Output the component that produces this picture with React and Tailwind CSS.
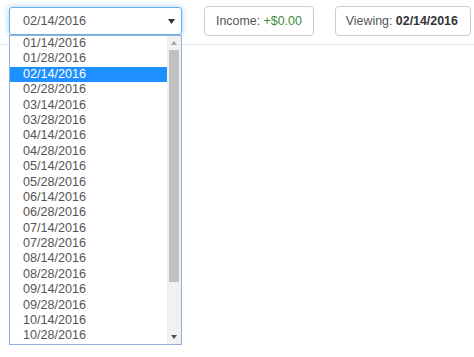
import React from "react";

const dates = [
  "01/14/2016", "01/28/2016", "02/14/2016", "02/28/2016", "03/14/2016",
  "03/28/2016", "04/14/2016", "04/28/2016", "05/14/2016", "05/28/2016",
  "06/14/2016", "06/28/2016", "07/14/2016", "07/28/2016", "08/14/2016",
  "08/28/2016", "09/14/2016", "09/28/2016", "10/14/2016", "10/28/2016",
];

export default function App() {
  const selected = "02/14/2016";
  return (
    <div className="relative w-[474px] h-[357px] bg-white text-[12.6px] text-[#333] font-['Liberation_Sans',Arial,sans-serif]">
      <div className="flex items-start h-[45px] border-b border-[#e7e7e7] pl-[9px] pt-[6px]">
        <div className="mt-[1px] flex items-center justify-between w-[173px] h-[28px] pl-[13px] pr-[6px] rounded-[3px] border border-[#66afe9] shadow-[0_0_6px_rgba(102,175,233,0.6)] text-[#555]">
          <span>{selected}</span>
          <svg width="7" height="5" viewBox="0 0 7 5">
            <path d="M0 0 H7 L3.5 5 Z" fill="#333" />
          </svg>
        </div>
        <div className="ml-[22px] flex items-center h-[30px] pl-[11px] pr-[11px] rounded-[4px] border border-[#ccc] text-[12.4px]">
          <span className="text-[#555]">Income:&nbsp;</span>
          <span className="text-[#3c8a3c]">+$0.00</span>
        </div>
        <div className="ml-[21px] flex items-center h-[30px] pl-[10px] pr-[12px] rounded-[4px] border border-[#ccc] text-[12.4px]">
          <span className="text-[#555]">Viewing:&nbsp;</span>
          <span className="font-bold">{selected}</span>
        </div>
      </div>

      <div className="absolute left-[9px] top-[35px] w-[173px] h-[310px] flex border border-[#8fb0d8] bg-white">
        <div className="flex-1 flex flex-col">
          {dates.map((d) => (
            <div
              key={d}
              className={
                d === selected
                  ? "h-[15.4px] leading-[15.4px] pl-[13px] bg-[#1e90ff] text-white"
                  : "h-[15.4px] leading-[15.4px] pl-[13px] text-[#555]"
              }
            >
              {d}
            </div>
          ))}
        </div>
        <div className="w-[14px] flex flex-col bg-[#f1f1f1]">
          <div className="h-[14px] flex items-center justify-center">
            <svg width="6" height="4" viewBox="0 0 6 4">
              <path d="M0 4 H6 L3 0 Z" fill="#a3a3a3" />
            </svg>
          </div>
          <div className="mx-[2px] h-[232px] bg-[#c1c1c1]" />
          <div className="flex-1" />
          <div className="h-[14px] flex items-center justify-center">
            <svg width="6" height="4" viewBox="0 0 6 4">
              <path d="M0 0 H6 L3 4 Z" fill="#505050" />
            </svg>
          </div>
        </div>
      </div>
    </div>
  );
}
